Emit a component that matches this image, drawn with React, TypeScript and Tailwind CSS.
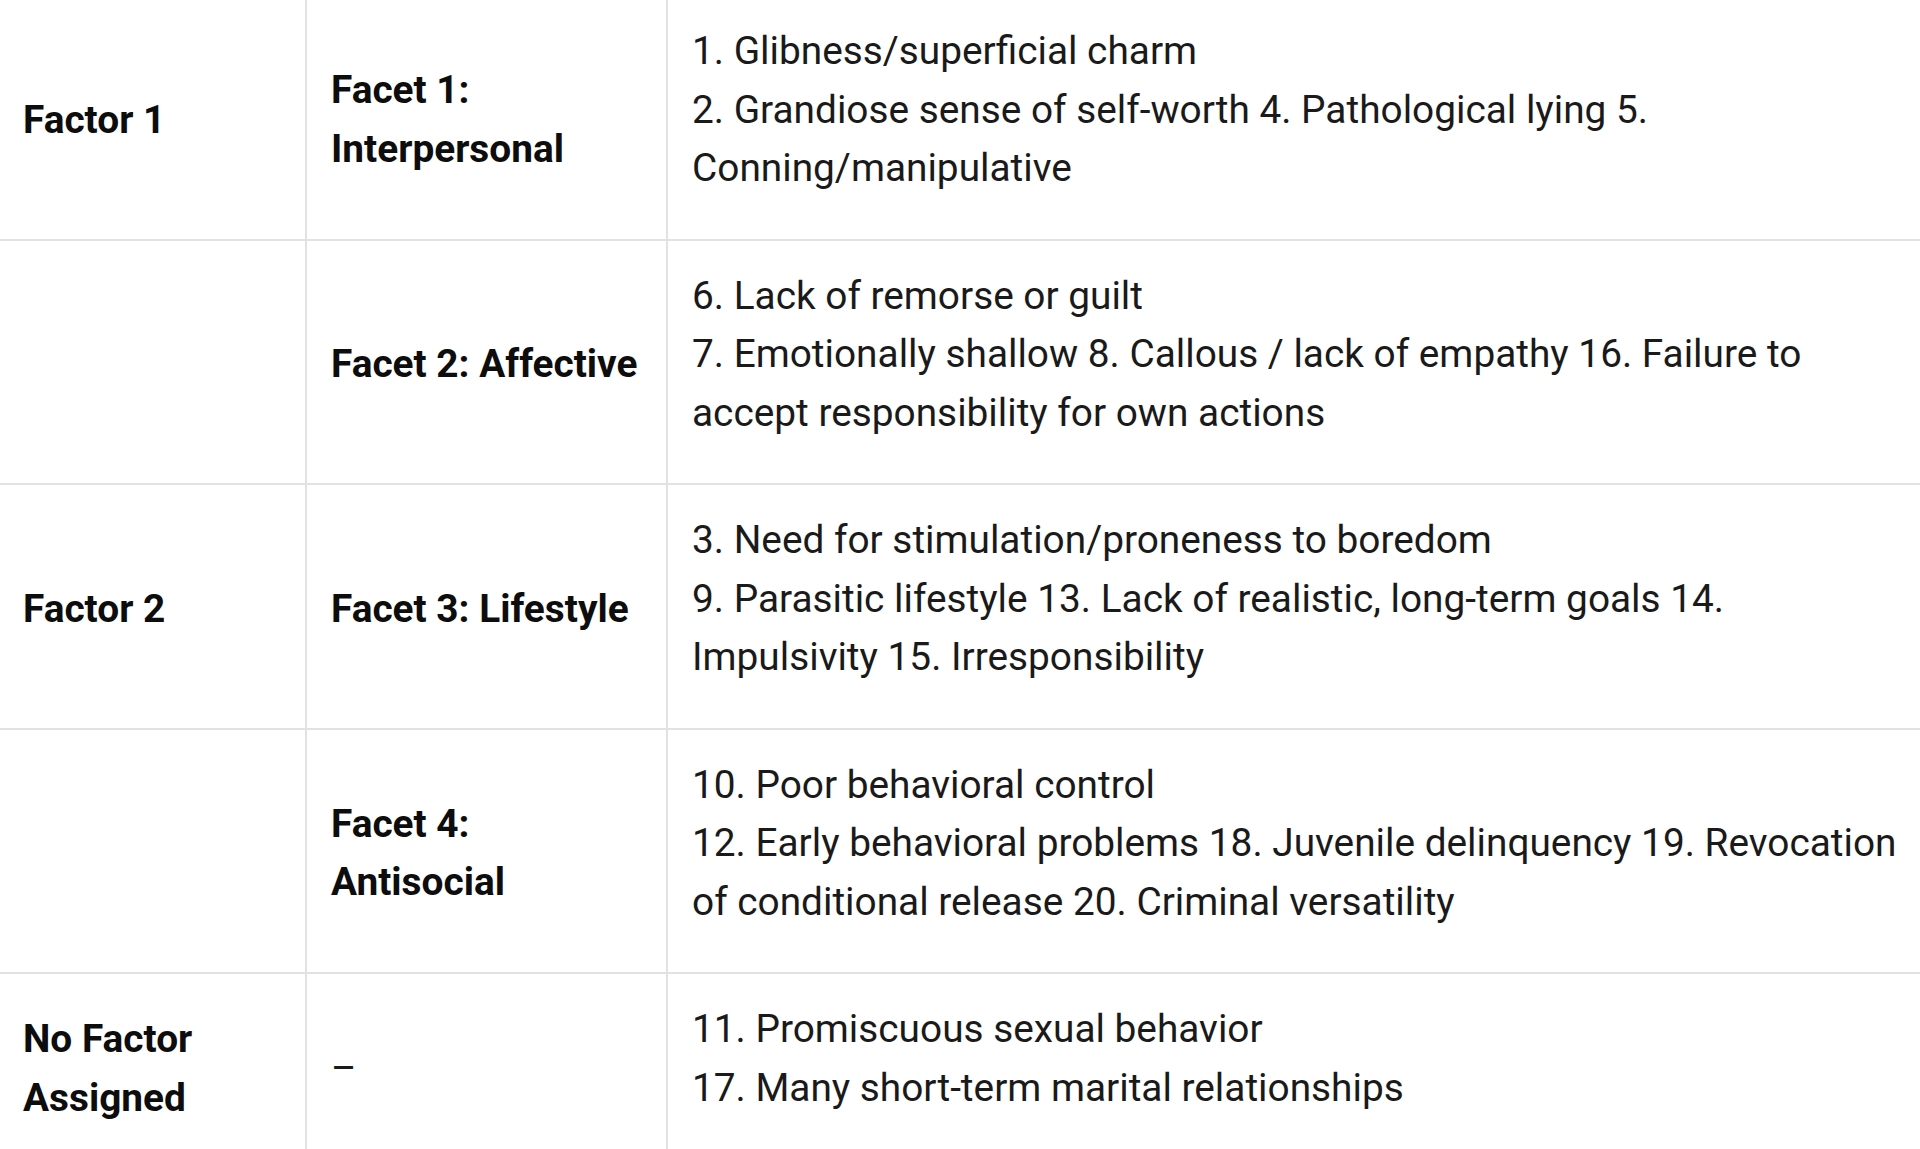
const rows = [
  {
    factor: 'Factor 1',
    facet: 'Facet 1: Interpersonal',
    items: ['1. Glibness/superficial charm', '2. Grandiose sense of self-worth 4. Pathological lying 5. Conning/manipulative'],
  },
  {
    factor: '',
    facet: 'Facet 2: Affective',
    items: ['6. Lack of remorse or guilt', '7. Emotionally shallow 8. Callous / lack of empathy 16. Failure to accept responsibility for own actions'],
  },
  {
    factor: 'Factor 2',
    facet: 'Facet 3: Lifestyle',
    items: ['3. Need for stimulation/proneness to boredom', '9. Parasitic lifestyle 13. Lack of realistic, long-term goals 14. Impulsivity 15. Irresponsibility'],
  },
  {
    factor: '',
    facet: 'Facet 4: Antisocial',
    items: ['10. Poor behavioral control', '12. Early behavioral problems 18. Juvenile delinquency 19. Revocation of conditional release 20. Criminal versatility'],
  },
  {
    factor: 'No Factor Assigned',
    facet: '',
    items: ['11. Promiscuous sexual behavior', '17. Many short-term marital relationships'],
  },
];

export default function App() {
  return (
    <div className="w-[1920px] h-[1149px] overflow-hidden bg-white font-['Roboto','Liberation_Sans',sans-serif] text-[38.8px] leading-[58.5px] text-[#1a1a1a]">
      <table className="-mt-[4px] w-full table-fixed border-collapse">
        <colgroup>
          <col className="w-[306px]" />
          <col className="w-[361px]" />
          <col />
        </colgroup>
        <tbody>
          {rows.map((row, i) => (
            <tr key={i} className="border-b-2 border-[#e2e2e2]">
              <td className="border-r-2 border-[#e2e2e2] pl-[23px] pr-4 pt-[5px] align-middle font-bold text-[#0d0d0d]">
                {row.factor}
              </td>
              <td className="border-r-2 border-[#e2e2e2] pl-[24px] pr-[22px] pt-[5px] align-middle font-bold text-[#0d0d0d]">
                {row.facet || <span className="font-normal text-[#1a1a1a]">–</span>}
              </td>
              <td className="pl-[24px] pr-[16px] pt-[26px] pb-[41px] align-top">
                {row.items.map((t, j) => (
                  <div key={j}>{t}</div>
                ))}
              </td>
            </tr>
          ))}
        </tbody>
      </table>
    </div>
  );
}
